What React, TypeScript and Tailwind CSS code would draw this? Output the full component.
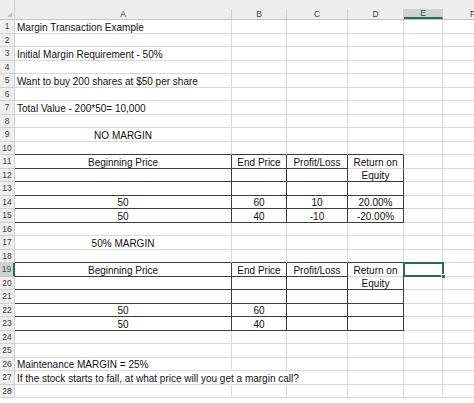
import React from 'react';

// column widths for A..F, row header is 15px
const colWidths = ['w-[217px]', 'w-[55px]', 'w-[61px]', 'w-[56px]', 'w-[39px]', 'w-[60px]'];
const colLetters = ['A', 'B', 'C', 'D', 'E', 'F'];

const leftText: Record<number, string> = {
  1: 'Margin Transaction Example',
  3: 'Initial Margin Requirement - 50%',
  5: 'Want to buy 200 shares at $50 per share',
  7: 'Total Value - 200*50= 10,000',
  26: 'Maintenance MARGIN = 25%',
  27: 'If the stock starts to fall, at what price will you get a margin call?',
};

const centerText: Record<number, string> = {
  9: 'NO MARGIN',
  17: '50% MARGIN',
};

const tableRows: Record<number, string[]> = {
  11: ['Beginning Price', 'End Price', 'Profit/Loss', 'Return on'],
  12: ['', '', '', 'Equity'],
  14: ['50', '60', '10', '20.00%'],
  15: ['50', '40', '-10', '-20.00%'],
  19: ['Beginning Price', 'End Price', 'Profit/Loss', 'Return on'],
  20: ['', '', '', 'Equity'],
  22: ['50', '60', '', ''],
  23: ['50', '40', '', ''],
};

const inTable = (r: number) => (r >= 11 && r <= 15) || (r >= 19 && r <= 23);
const aboveTable = (r: number) => r === 10 || r === 18;

const SELECTED_ROW = 19;
const SELECTED_COL = 4;

const Cell = ({ row, col }: { row: number; col: number }) => {
  const bottomDark =
    col <= 3 && (aboveTable(row) || (inTable(row) && !((row === 11 || row === 19) && col === 3)));
  const rightDark = inTable(row) && col <= 3;
  const hideRight = row === 27 && (col === 0 || col === 1);

  let content: string | undefined;
  let align = 'justify-center';
  if (col === 0 && leftText[row]) {
    content = leftText[row];
    align = 'justify-start pl-[2px]';
  } else if (col === 0 && centerText[row]) {
    content = centerText[row];
  } else if (tableRows[row] && col <= 3) {
    content = tableRows[row][col] || undefined;
  }

  const selected = row === SELECTED_ROW && col === SELECTED_COL;

  return (
    <div
      className={`relative flex h-full shrink-0 items-end whitespace-nowrap border-b border-r ${colWidths[col]} ${align} ${
        bottomDark ? 'border-b-[#3d3d3d]' : 'border-b-[#d9d9d9]'
      } ${hideRight ? 'border-r-transparent' : rightDark ? 'border-r-[#3d3d3d]' : 'border-r-[#d9d9d9]'}`}
    >
      {content && <span className="leading-none">{content}</span>}
      {selected && (
        <div className="absolute -left-px -top-px z-10 h-[15px] w-[41px] border-2 border-[#217346]">
          <div className="absolute -bottom-[4px] -right-[4px] h-[5px] w-[5px] border border-white bg-[#217346]" />
        </div>
      )}
    </div>
  );
};

const App = () => {
  const rows = Array.from({ length: 28 }, (_, i) => i + 1);

  return (
    <div
      className="h-[403px] w-[474px] overflow-hidden bg-white text-[10px] text-[#111]"
      style={{ fontFamily: '"Liberation Sans", Arial, sans-serif' }}
    >
      {/* column header */}
      <div className="flex h-[20px] border-b border-[#c3c3c3] bg-[#eeeeee]">
        <div className="relative h-full w-[15px] shrink-0 border-r border-[#d0d0d0]">
          <svg className="absolute bottom-[2px] right-[2px]" width="5" height="5" viewBox="0 0 5 5">
            <polygon points="5,0 5,5 0,5" fill="#bdbdbd" />
          </svg>
        </div>
        {colLetters.map((l, i) => (
          <div key={l} className={`flex h-full shrink-0 items-end ${colWidths[i]}`}>
            <div
              className={`flex h-[10px] w-full items-center justify-center border-r border-[#cfcfcf] text-[8.5px] leading-none ${
                i === SELECTED_COL
                  ? 'border-b-2 border-b-[#217346] bg-[#d2d2d2] text-[#1d5e3a]'
                  : 'text-[#444]'
              }`}
            >
              {l}
            </div>
          </div>
        ))}
      </div>

      {rows.map((r) => (
        <div key={r} className="flex h-[13.5px]">
          <div
            className={`flex h-full w-[15px] shrink-0 items-center justify-center border-b text-[8.5px] leading-none ${
              r === SELECTED_ROW
                ? 'border-r-2 border-b-[#c9c9c9] border-r-[#217346] bg-[#d2d2d2] text-[#1d5e3a]'
                : 'border-r border-[#d0d0d0] bg-[#eeeeee] text-[#444]'
            }`}
          >
            {r}
          </div>
          {colLetters.map((_, c) => (
            <Cell key={c} row={r} col={c} />
          ))}
        </div>
      ))}
    </div>
  );
};

export default App;
